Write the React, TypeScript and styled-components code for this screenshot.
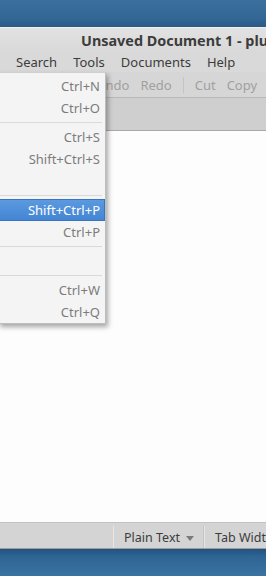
import styled, { createGlobalStyle } from "styled-components";

const GlobalStyle = createGlobalStyle`
  html, body {
    margin: 0;
    padding: 0;
    width: 266px;
    height: 576px;
    overflow: hidden;
    background: #336796;
  }
  body {
    font-family: "Noto Sans", "DejaVu Sans", sans-serif;
  }
`;

const Screen = styled.div`
  position: relative;
  width: 266px;
  height: 576px;
  display: flex;
  flex-direction: column;
  overflow: hidden;
`;

const Desktop = styled.div<{ $h: number; $bottom?: boolean }>`
  height: ${(p) => p.$h}px;
  flex: none;
  background: ${(p) =>
    p.$bottom
      ? "linear-gradient(#23527e, #2f6594 8px, #3a73a3)"
      : "linear-gradient(#3a6f9e, #336796 18px, #2b5a86)"};
`;

const Window = styled.div`
  flex: 1;
  display: flex;
  flex-direction: column;
  background: #d6d6d6;
`;

const TitleBar = styled.div`
  height: 24px;
  display: flex;
  align-items: center;
  padding-left: 81px;
  padding-top: 2px;
  box-sizing: border-box;
  font-size: 14.4px;
  font-weight: bold;
  color: #3c3c3c;
  white-space: nowrap;
  overflow: hidden;
  background: linear-gradient(#e2e2e2, #d9d9d9);
  border-top: 1px solid #f0f0f0;
`;

const MenuBar = styled.div`
  height: 21px;
  display: flex;
  align-items: center;
  padding-left: 8px;
  font-size: 13px;
  color: #3c3c3c;
  background: #d9d9d9;
`;

const MenuTitle = styled.span`
  padding: 0 8px;
  white-space: nowrap;
`;

const Toolbar = styled.div`
  height: 26px;
  display: flex;
  align-items: center;
  padding-left: 96px;
  gap: 11px;
  font-size: 13px;
  color: #a0a0a0;
  white-space: nowrap;
  overflow: hidden;
  background: #d6d6d6;
  border-bottom: 1px solid #b8b8b8;
  box-sizing: border-box;
`;

const ToolSep = styled.span`
  width: 1px;
  height: 16px;
  background: #c4c4c4;
`;

const TabArea = styled.div`
  height: 33px;
  flex: none;
  background: #cfcfcf;
  border-bottom: 1px solid #a9a9a9;
  box-shadow: 0 1px 0 #e4e4e4;
  box-sizing: border-box;
`;

const Editor = styled.div`
  flex: 1;
  background: #fdfdfd;
`;

const StatusBar = styled.div`
  height: 27px;
  flex: none;
  display: flex;
  align-items: stretch;
  padding-left: 113px;
  padding-top: 3px;
  box-sizing: border-box;
  background: #d4d4d4;
  border-top: 1px solid #c2c2c2;
  border-bottom: 1px solid #9c9c9c;
  font-size: 12.5px;
  color: #3c3c3c;
  overflow: hidden;
`;

const StatusButton = styled.div<{ $w?: number }>`
  display: flex;
  align-items: center;
  gap: 6px;
  padding: 0 10px;
  ${(p) => (p.$w ? `width: ${p.$w}px;` : "")}
  flex: none;
  white-space: nowrap;
  border-left: 1px solid #e6e6e6;
  border-right: 1px solid #c4c4c4;
  box-sizing: border-box;
`;

const Caret = styled.span`
  width: 0;
  height: 0;
  border-left: 4px solid transparent;
  border-right: 4px solid transparent;
  border-top: 5px solid #7a7a7a;
  margin-top: 2px;
`;

const Menu = styled.div`
  position: absolute;
  left: -2px;
  top: 72px;
  width: 108px;
  padding: 2px 0 0;
  box-sizing: border-box;
  background: #f4f4f4;
  border: 1px solid #bdbdbd;
  border-top-color: #d0d0d0;
  box-shadow: 2px 3px 5px rgba(0, 0, 0, 0.35);
  font-size: 13px;
`;

const Item = styled.div<{ $active?: boolean }>`
  height: 22px;
  display: flex;
  align-items: center;
  justify-content: flex-end;
  padding-right: 5px;
  white-space: nowrap;
  color: ${(p) => (p.$active ? "#ffffff" : "#7c7c7c")};
  background: ${(p) =>
    p.$active ? "linear-gradient(#5c9be0, #4384d3)" : "transparent"};
  box-shadow: ${(p) => (p.$active ? "inset 0 0 0 1px #3a74bd" : "none")};
`;

const Sep = styled.div`
  height: 7px;
  display: flex;
  align-items: center;
  &::after {
    content: "";
    flex: 1;
    height: 1px;
    margin-right: 3px;
    background: #d9d9d9;
  }
`;

const fileItems: ({ key: string; active?: boolean } | "sep")[] = [
  { key: "Ctrl+N" },
  { key: "Ctrl+O" },
  "sep",
  { key: "Ctrl+S" },
  { key: "Shift+Ctrl+S" },
  { key: "" },
  "sep",
  { key: "Shift+Ctrl+P", active: true },
  { key: "Ctrl+P" },
  "sep",
  { key: "" },
  "sep",
  { key: "Ctrl+W" },
  { key: "Ctrl+Q" },
];

export default function App() {
  return (
    <Screen>
      <GlobalStyle />
      <Desktop $h={27} />
      <Window>
        <TitleBar>Unsaved Document 1 - plu</TitleBar>
        <MenuBar>
          <MenuTitle>Search</MenuTitle>
          <MenuTitle>Tools</MenuTitle>
          <MenuTitle>Documents</MenuTitle>
          <MenuTitle>Help</MenuTitle>
        </MenuBar>
        <Toolbar>
          <span>Undo</span>
          <span>Redo</span>
          <ToolSep />
          <span>Cut</span>
          <span>Copy</span>
        </Toolbar>
        <TabArea />
        <Editor />
        <StatusBar>
          <StatusButton $w={91}>
            Plain Text <Caret />
          </StatusButton>
          <StatusButton>Tab Widt</StatusButton>
        </StatusBar>
      </Window>
      <Desktop $h={27} $bottom />
      <Menu>
        {fileItems.map((it, i) =>
          it === "sep" ? (
            <Sep key={i} />
          ) : (
            <Item key={i} $active={it.active}>
              {it.key}
            </Item>
          )
        )}
      </Menu>
    </Screen>
  );
}
